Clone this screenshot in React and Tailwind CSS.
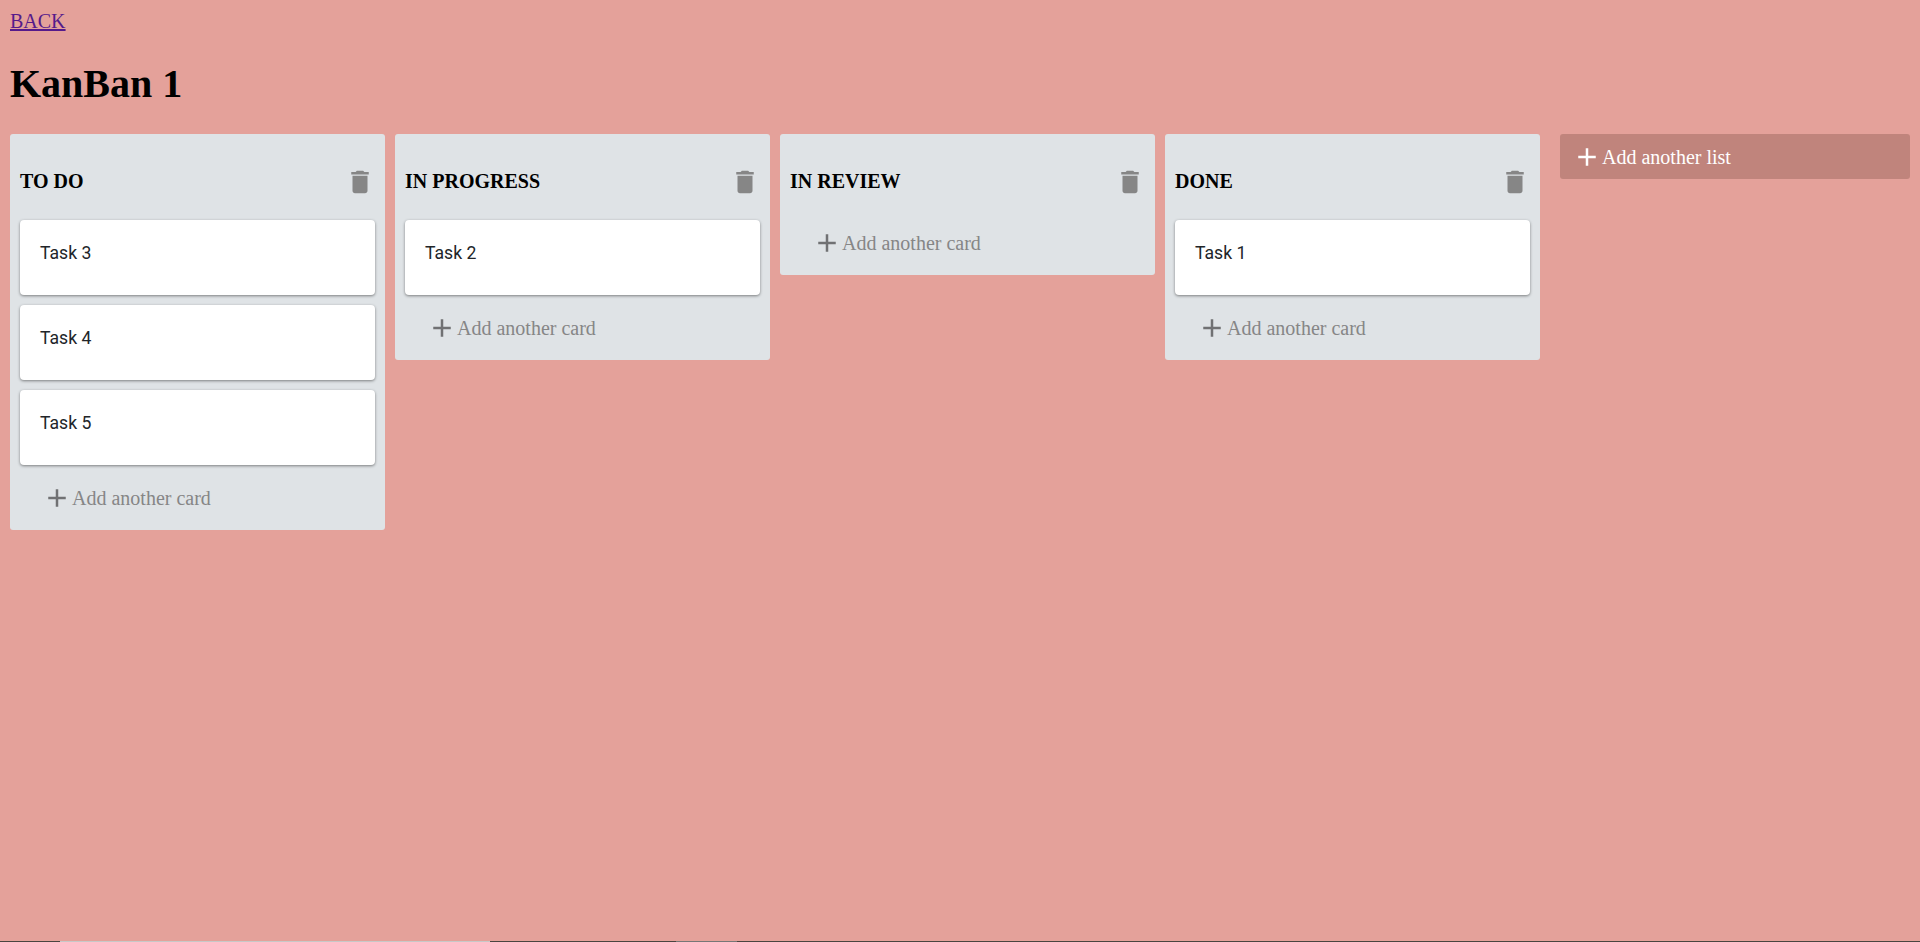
const lists = [
  { title: "TO DO", cards: ["Task 3", "Task 4", "Task 5"] },
  { title: "IN PROGRESS", cards: ["Task 2"] },
  { title: "IN REVIEW", cards: [] },
  { title: "DONE", cards: ["Task 1"] },
];

function PlusIcon({ className }) {
  return (
    <svg viewBox="0 0 24 24" className={className} fill="currentColor">
      <path d="M19 13h-6v6h-2v-6H5v-2h6V5h2v6h6v2z" />
    </svg>
  );
}

function TrashIcon() {
  return (
    <svg viewBox="0 0 24 24" className="w-[30px] h-[30px] text-[#868686]" fill="currentColor">
      <path d="M6 19c0 1.1.9 2 2 2h8c1.1 0 2-.9 2-2V7H6v12zM19 4h-3.5l-1-1h-5l-1 1H5v2h14V4z" />
    </svg>
  );
}

function KanbanList({ title, cards }) {
  return (
    <div className="w-[375px] shrink-0 bg-[#dfe3e6] rounded-[3px] px-[10px] pb-[10px]">
      <div className="h-[86px] flex items-center justify-between pt-[9px]">
        <h4 className="text-[20px] font-bold leading-[23px] text-black">{title}</h4>
        <TrashIcon />
      </div>
      <div className="flex flex-col">
        {cards.map((card) => (
          <div
            key={card}
            className="h-[75px] mb-[10px] bg-white rounded-[4px] px-[20px] pt-[21px] font-['Roboto',sans-serif] text-[17.6px] leading-[24px] text-[#212529] shadow-[0_1px_3px_rgba(0,0,0,0.45)]"
          >
            {card}
          </div>
        ))}
      </div>
      <div className="h-[45px] flex items-center pl-[22px] text-[20px] text-[#868686]">
        <PlusIcon className="w-[30px] h-[30px] text-[#707173]" />
        <span>Add another card</span>
      </div>
    </div>
  );
}

export default function App() {
  return (
    <div className="relative h-[942px] overflow-hidden bg-[#e4a19a] font-['Liberation_Serif',serif] text-black px-[10px] pt-[10px]">
      <a href="#" className="block text-[20px] leading-[23px] text-[#551a8b] underline">
        BACK
      </a>
      <h1 className="mt-[28px] text-[40px] font-bold leading-[46px]">KanBan 1</h1>
      <div className="mt-[27px] flex items-start gap-[10px]">
        {lists.map((list) => (
          <KanbanList key={list.title} title={list.title} cards={list.cards} />
        ))}
        <div className="ml-[10px] w-[350px] h-[45px] bg-[#c0847c] rounded-[3px] flex items-center pl-[12px] text-[20px] text-white">
          <PlusIcon className="w-[30px] h-[30px]" />
          <span>Add another list</span>
        </div>
      </div>
      <div className="absolute left-0 right-0 bottom-0 h-px flex bg-[#4a4440]">
        <div className="w-[60px]" />
        <div className="w-[430px] bg-[#c8c8c8]" />
        <div className="w-[186px]" />
        <div className="w-[61px] bg-[#777777]" />
      </div>
    </div>
  );
}
